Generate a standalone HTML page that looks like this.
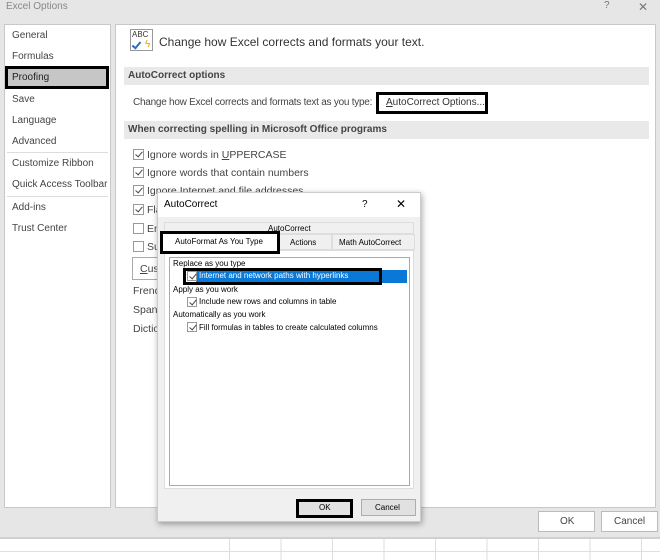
<!DOCTYPE html>
<html><head><style>
*{margin:0;padding:0;box-sizing:border-box}
body{width:660px;height:560px;position:relative;overflow:hidden;background:#e6e6e6;font-family:"Liberation Sans",sans-serif;color:#444}
.a{position:absolute}
.t{font-size:10px;white-space:nowrap}
.cb{position:absolute;width:11px;height:11px;border:1px solid #999;background:#fff}
.cb.c::after{content:"";position:absolute;left:3px;top:0px;width:3px;height:6px;border:solid #444;border-width:0 1.3px 1.3px 0;transform:rotate(40deg)}
.d .t{font-size:8px;color:#000}
</style></head><body>
<div class="a t" style="left:6px;top:1px;color:#888;font-size:10px">Excel Options</div>
<div class="a t" style="left:604px;top:0px;color:#777">?</div>
<div class="a t" style="left:638px;top:0px;color:#777;font-size:12px">✕</div>
<!-- left nav -->
<div class="a" style="left:4px;top:24px;width:107px;height:484px;background:#fff;border:1px solid #c8c8c8"></div>
<div class="a t" style="left:12px;top:30px">General</div>
<div class="a t" style="left:12px;top:51px">Formulas</div>
<div class="a" style="left:5px;top:66px;width:104px;height:23px;background:#c6c6c6;border:3px solid #000"></div>
<div class="a t" style="left:12px;top:72px;color:#222">Proofing</div>
<div class="a t" style="left:12px;top:94px">Save</div>
<div class="a t" style="left:12px;top:115px">Language</div>
<div class="a t" style="left:12px;top:136px">Advanced</div>
<div class="a" style="left:7px;top:152px;width:101px;height:1px;background:#ddd"></div>
<div class="a t" style="left:12px;top:158px">Customize Ribbon</div>
<div class="a t" style="left:12px;top:179px">Quick Access Toolbar</div>
<div class="a" style="left:7px;top:196px;width:101px;height:1px;background:#ddd"></div>
<div class="a t" style="left:12px;top:202px">Add-ins</div>
<div class="a t" style="left:12px;top:223px">Trust Center</div>
<!-- right panel -->
<div class="a" style="left:115px;top:24px;width:541px;height:484px;background:#fff;border:1px solid #c8c8c8"></div>
<div class="a" style="left:130px;top:29px;width:23px;height:22px;border:1px solid #999;background:#fff;font-size:8px;color:#333;padding-left:1px">ABC<div class="a" style="left:3px;top:10px;width:5px;height:9px;border:solid #2a6fc0;border-width:0 2px 2px 0;transform:rotate(40deg)"></div><div class="a" style="left:14px;top:9px;color:#e8a000;font-size:10px">ϟ</div></div>
<div class="a t" style="left:159px;top:35px;font-size:12px;color:#333">Change how Excel corrects and formats your text.</div>
<div class="a" style="left:124px;top:67px;width:525px;height:18px;background:#e9e9e9"></div>
<div class="a t" style="left:128px;top:70px;font-weight:bold;color:#444">AutoCorrect options</div>
<div class="a t" style="left:133px;top:97px;letter-spacing:-0.25px">Change how Excel corrects and formats text as you type:</div>
<div class="a" style="left:376px;top:92px;width:112px;height:22px;border:3px solid #000;background:#fff"></div>
<div class="a t" style="left:386px;top:97px;color:#333"><u>A</u>utoCorrect Options...</div>
<div class="a" style="left:124px;top:121px;width:525px;height:18px;background:#e9e9e9"></div>
<div class="a t" style="left:128px;top:124px;font-weight:bold;color:#444">When correcting spelling in Microsoft Office programs</div>
<div class="cb c" style="left:133px;top:149px"></div><div class="a t" style="left:147px;top:149px;font-size:10.5px">Ignore words in <u>U</u>PPERCASE</div>
<div class="cb c" style="left:133px;top:167px"></div><div class="a t" style="left:147px;top:167px;font-size:10.5px">Ignore words that contain numbers</div>
<div class="cb c" style="left:133px;top:185px"></div><div class="a t" style="left:147px;top:185px;font-size:10.5px">Ignore Internet and file addresses</div>
<div class="cb c" style="left:133px;top:204px"></div><div class="a t" style="left:147px;top:204px;font-size:10.5px">Fla</div>
<div class="cb" style="left:133px;top:223px"></div><div class="a t" style="left:147px;top:223px;font-size:10.5px">En</div>
<div class="cb" style="left:133px;top:241px"></div><div class="a t" style="left:147px;top:241px;font-size:10.5px">Su</div>
<div class="a" style="left:132px;top:257px;width:40px;height:23px;border:1px solid #aaa;background:#fff"></div>
<div class="a t" style="left:140px;top:263px;font-size:10.5px"><u>C</u>ust</div>
<div class="a t" style="left:133px;top:285px;font-size:10.5px">French</div>
<div class="a t" style="left:133px;top:304px;font-size:10.5px">Spanish</div>
<div class="a t" style="left:133px;top:323px;font-size:10.5px">Dictio</div>
<!-- bottom -->
<div class="a" style="left:538px;top:511px;width:57px;height:21px;border:1px solid #bbb;background:#fff"></div>
<div class="a t" style="left:560px;top:516px">OK</div>
<div class="a" style="left:601px;top:511px;width:57px;height:21px;border:1px solid #bbb;background:#fff"></div>
<div class="a t" style="left:614px;top:516px">Cancel</div>
<div class="a" style="left:0;top:537px;width:660px;height:23px;background:#fff;border-top:2px solid #d0d0d0"></div>
<div class="a" style="left:0;top:551px;width:660px;height:1px;background:#e0e0e0"></div>
<div class="a" style="left:229px;top:539px;width:420px;height:21px;background:repeating-linear-gradient(90deg,#ddd 0 1px,transparent 1px 51.5px)"></div>
<!-- dialog -->
<div class="a d" style="left:157px;top:192px;width:264px;height:330px;background:#f0f0f0;border:1px solid #ccc;box-shadow:1px 2px 6px rgba(0,0,0,.35)">
<div class="a" style="left:0;top:0;width:262px;height:24px;background:#fff"></div>
<div class="a t" style="left:6px;top:6px;font-size:10px">AutoCorrect</div>
<div class="a t" style="left:204px;top:6px;font-size:10px">?</div>
<div class="a t" style="left:238px;top:4px;font-size:12px">✕</div>
<div class="a" style="left:6px;top:29px;width:250px;height:12px;border:1px solid #ddd"></div>
<div class="a t" style="left:110px;top:31px">AutoCorrect</div>
<div class="a" style="left:120px;top:41px;width:54px;height:16px;border:1px solid #ddd;background:#f0f0f0"></div>
<div class="a t" style="left:132px;top:45px">Actions</div>
<div class="a" style="left:174px;top:41px;width:83px;height:16px;border:1px solid #ddd;background:#f0f0f0"></div>
<div class="a t" style="left:181px;top:45px">Math AutoCorrect</div>
<div class="a" style="left:6px;top:57px;width:250px;height:239px;border:1px solid #ddd;background:#fff"></div>
<div class="a" style="left:2px;top:38px;width:120px;height:23px;border:3px solid #000;background:#fff"></div>
<div class="a t" style="left:17px;top:44px">AutoFormat As You Type</div>
<div class="a" style="left:11px;top:64px;width:241px;height:229px;border:1px solid #aaa;background:#fff"></div>
<div class="a t" style="left:15px;top:66px">Replace as you type</div>
<div class="a" style="left:38px;top:77px;width:211px;height:13px;background:#0a78d7"></div>
<div class="a" style="left:25px;top:75px;width:199px;height:17px;border:3px solid #000"></div>
<div class="cb c" style="left:29px;top:78px;width:10px;height:10px"></div>
<div class="a t" style="left:41px;top:78px;color:#fff">Internet and network paths with hyperlinks</div>
<div class="a t" style="left:15px;top:92px">Apply as you work</div>
<div class="cb c" style="left:29px;top:104px;width:10px;height:10px"></div>
<div class="a t" style="left:41px;top:104px">Include new rows and columns in table</div>
<div class="a t" style="left:15px;top:117px">Automatically as you work</div>
<div class="cb c" style="left:29px;top:129px;width:10px;height:10px"></div>
<div class="a t" style="left:41px;top:130px">Fill formulas in tables to create calculated columns</div>
<div class="a" style="left:138px;top:306px;width:57px;height:19px;border:3px solid #000;background:#e1e1e1"></div>
<div class="a t" style="left:161px;top:310px">OK</div>
<div class="a" style="left:203px;top:306px;width:55px;height:17px;border:1px solid #adadad;background:#e1e1e1"></div>
<div class="a t" style="left:217px;top:310px">Cancel</div>
</div>
</body></html>
